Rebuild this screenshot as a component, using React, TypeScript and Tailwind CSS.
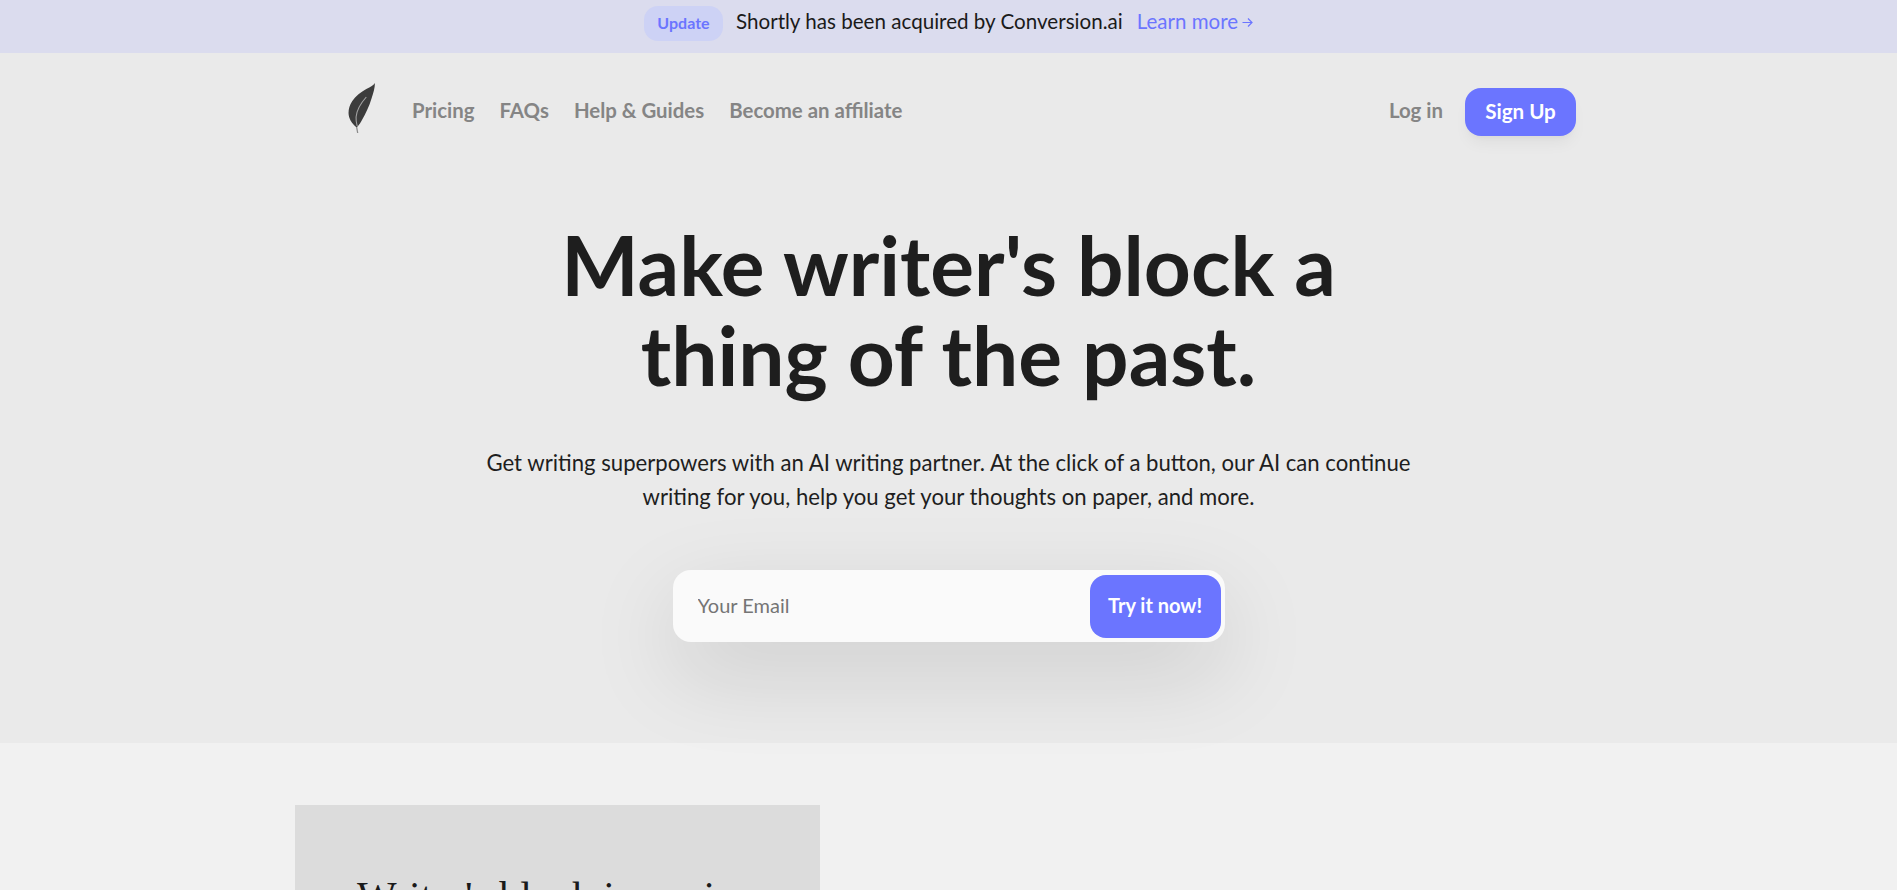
import React from 'react';

const links = ['Pricing', 'FAQs', 'Help & Guides', 'Become an affiliate'];

const Feather: React.FC = () => (
  <svg width="28" height="50" viewBox="0 0 26 50" preserveAspectRatio="none" aria-hidden="true" className="-mt-[8px]">
    <path
      d="M25 0C24 2 21 4 17 6C12 9 7 13 4 18C1.5 22 0.5 26 0.5 30C0.5 35 3 40 8 44.5C10.5 42 12 39 13.5 36C16 31 19.5 24 22 15C23.5 10 25 5 25 0Z"
      fill="#3c3c3c"
    />
    <path d="M17 14C12 20 8 27 7.5 34C7.3 37 7.8 40 8.5 43" fill="none" stroke="#a3a3a3" strokeWidth="1" />
    <path d="M8 44L9 50" fill="none" stroke="#8c8c8c" strokeWidth="1.2" />
  </svg>
);

const App: React.FC = () => {
  return (
    <div className="h-screen overflow-hidden bg-[#f1f1f1] font-['Lato','Liberation_Sans',sans-serif]">
      <div className="h-[53px] pt-[6px] bg-[#dbdcee] flex items-start justify-center">
        <div className="h-[35px] flex items-center">
          <span className="w-[79px] h-[35px] mr-[13px] pb-[2px] flex items-center justify-center rounded-[14px] bg-[#cdd2f5] text-[16px] font-bold text-[#6b75ff]">
            Update
          </span>
          <span className="pb-[4px] text-[20.6px] text-[#1a1a1a]">Shortly has been acquired by Conversion.ai</span>
          <a className="ml-[14px] pb-[4px] flex items-center gap-[4px] text-[20.5px] text-[#6b75ff]">
            Learn more
            <svg width="11" height="11" viewBox="0 0 11 11" fill="none" stroke="currentColor" strokeWidth="1.2" className="mt-[2px]">
              <path d="M0.5 5.5H10M6 1.5L10 5.5L6 9.5" />
            </svg>
          </a>
        </div>
      </div>

      <section className="h-[690px] bg-[#eaeaea]">
        <nav className="w-[1228px] ml-[348px] pt-[35px] flex items-center justify-between">
          <div className="flex items-center">
            <Feather />
            <ul className="ml-[36px] -mt-[3px] flex gap-[25px] text-[20.4px] font-bold text-[#858585]">
              {links.map((l) => (
                <li key={l}>{l}</li>
              ))}
            </ul>
          </div>
          <div className="flex items-center gap-[22px]">
            <a className="-mt-[3px] text-[20.4px] font-bold text-[#858585]">Log in</a>
            <button className="w-[111px] h-[48px] pb-[2px] rounded-[16px] bg-[#6b75ff] text-[20.6px] font-bold text-white shadow-lg shadow-black/5">
              Sign Up
            </button>
          </div>
        </nav>

        <h1 className="mt-[83px] text-center text-[82px] leading-[90px] font-bold text-[#1e1e1e]">
          Make writer's block a
          <br />
          thing of the past.
        </h1>
        <p className="mt-[47px] text-center text-[22.15px] leading-[34px] text-[#1e1e1e]">
          Get writing superpowers with an AI writing partner. At the click of a button, our AI can continue
          <br />
          writing for you, help you get your thoughts on paper, and more.
        </p>

        <form className="mt-[56px] mx-auto w-[552px] h-[72px] p-[4px] rounded-[18px] bg-[#fafafa] flex items-center shadow-[0_30px_90px_rgba(0,0,0,0.13)]">
          <input
            placeholder="Your Email"
            className="flex-1 min-w-0 pl-[21px] pb-[3px] bg-transparent text-[20px] outline-none placeholder:text-[#757575]"
          />
          <button type="button" className="w-[131px] h-[63px] pb-[2px] rounded-[16px] bg-[#6b75ff] text-[20px] font-bold text-white">
            Try it now!
          </button>
        </form>
      </section>

      <section className="pt-[62px] pl-[295px]">
        <div className="w-[525px] h-[300px] bg-[#dcdcdc] pt-[68px] pl-[62px]">
          <h2 className="font-['Liberation_Serif',serif] text-[42px] leading-[48px] text-[#1a1a1a]">
            Writer's block is a misery
          </h2>
        </div>
      </section>
    </div>
  );
};

export default App;
